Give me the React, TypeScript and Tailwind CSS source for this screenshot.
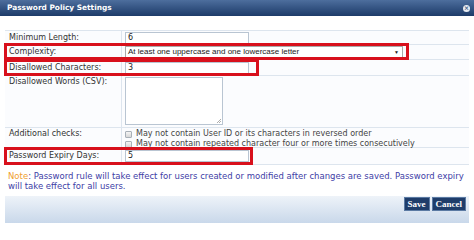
import React from "react";

const font = { fontFamily: '"DejaVu Sans", Verdana, sans-serif' };

const RedBox = ({ className }: { className: string }) => (
  <div className={`pointer-events-none absolute border-[3px] border-[#d8101c] ${className}`} />
);

const Row = ({
  label,
  h,
  top = false,
  children,
  box,
}: {
  label: string;
  h: string;
  top?: boolean;
  children?: React.ReactNode;
  box?: string;
}) => (
  <div className={`relative grid grid-cols-[117px_1fr] border-b border-[#dde5ee] ${h}`}>
    <div className={`flex border-r border-[#dde5ee] pl-[4px] text-[#333] ${top ? "items-start pt-[2px]" : "items-center"}`}>
      {label}
    </div>
    <div className={`flex pl-[3px] ${top ? "items-start pt-[1px]" : "items-center"}`}>{children}</div>
    {box && <RedBox className={box} />}
  </div>
);

const Input = ({ value }: { value: string }) => (
  <div className="flex h-[12px] w-[124px] items-center border border-[#b9c5d2] bg-white pl-[2px] text-[#222]">
    {value}
  </div>
);

const Check = ({ text }: { text: string }) => (
  <div className="flex h-[10px] items-center gap-[4px] text-[#444]">
    <span className="h-[7px] w-[7px] rounded-[1px] border border-[#a8b0b8] bg-gradient-to-b from-[#f4f4f4] to-[#d8d8d8]" />
    {text}
  </div>
);

export default function App() {
  return (
    <div className="h-[226px] w-[474px] overflow-hidden bg-white text-[8px] leading-none" style={font}>
      <div className="flex h-[16px] items-center justify-between bg-gradient-to-b from-[#4d6e9d] to-[#1d3b69] pl-[7px] pr-[4px]">
        <span className="text-[7.4px] font-bold text-white">Password Policy Settings</span>
        <span className="flex h-[7px] w-[7px] items-center justify-center rounded-full bg-[#e8edf3] text-[6px] font-bold leading-none text-[#34527e]">
          ×
        </span>
      </div>

      <div className="mx-[5px] mt-[14px] border-t border-[#dde5ee] bg-[#fbfcfe]">
        <Row label="Minimum Length:" h="h-[14px]">
          <Input value="6" />
        </Row>
        <Row label="Complexity:" h="h-[15px]" box="-left-[1px] -top-[2px] h-[17px] w-[405px]">
          <div className="flex h-[12px] w-[278px] items-center justify-between border border-[#a9a9a9] bg-white pl-[2px] pr-[3px] text-[#222]" style={{ fontFamily: '"Liberation Sans", Arial, sans-serif' }}>
            <span>At least one uppercase and one lowercase letter</span>
            <span className="text-[5px]">▼</span>
          </div>
        </Row>
        <Row label="Disallowed Characters:" h="h-[16px]" box="-left-[1px] -top-[1px] h-[17px] w-[255px]">
          <Input value="3" />
        </Row>
        <Row label="Disallowed Words (CSV):" h="h-[52px]" top>
          <div className="relative h-[48px] w-[98px] border border-[#b9c5d2] bg-white">
            <svg className="absolute bottom-[1px] right-[1px]" width="5" height="5" viewBox="0 0 5 5">
              <path d="M1 5 L5 1 M3 5 L5 3" stroke="#999" strokeWidth="0.8" />
            </svg>
          </div>
        </Row>
        <Row label="Additional checks:" h="h-[20px]" top>
          <div className="flex flex-col">
            <Check text="May not contain User ID or its characters in reversed order" />
            <Check text="May not contain repeated character four or more times consecutively" />
          </div>
        </Row>
        <Row label="Password Expiry Days:" h="h-[17px]" box="-left-[1px] -top-[1px] h-[18px] w-[249px]">
          <Input value="5" />
        </Row>
      </div>

      <p className="ml-[8px] mt-[6px] w-[458px] text-[8.5px] leading-[10px] text-[#4040a6]">
        <span className="text-[#f0a030]">Note</span>: Password rule will take effect for users created or modified after changes are saved. Password expiry will take effect for all users.
      </p>

      <div className="mx-[5px] mt-[5px] flex h-[27px] items-start justify-end gap-[2px] bg-gradient-to-b from-[#eef3f9] to-[#c9d8ea] pr-[3px] pt-[1px]">
        {["Save", "Cancel"].map((b) => (
          <button
            key={b}
            className="flex h-[14px] items-center border border-[#5b7aa3] bg-[#1f3d6a] px-[3px] text-[9px] font-bold text-white"
            style={{ fontFamily: '"Liberation Serif", "Times New Roman", serif' }}
          >
            {b}
          </button>
        ))}
      </div>
    </div>
  );
}
